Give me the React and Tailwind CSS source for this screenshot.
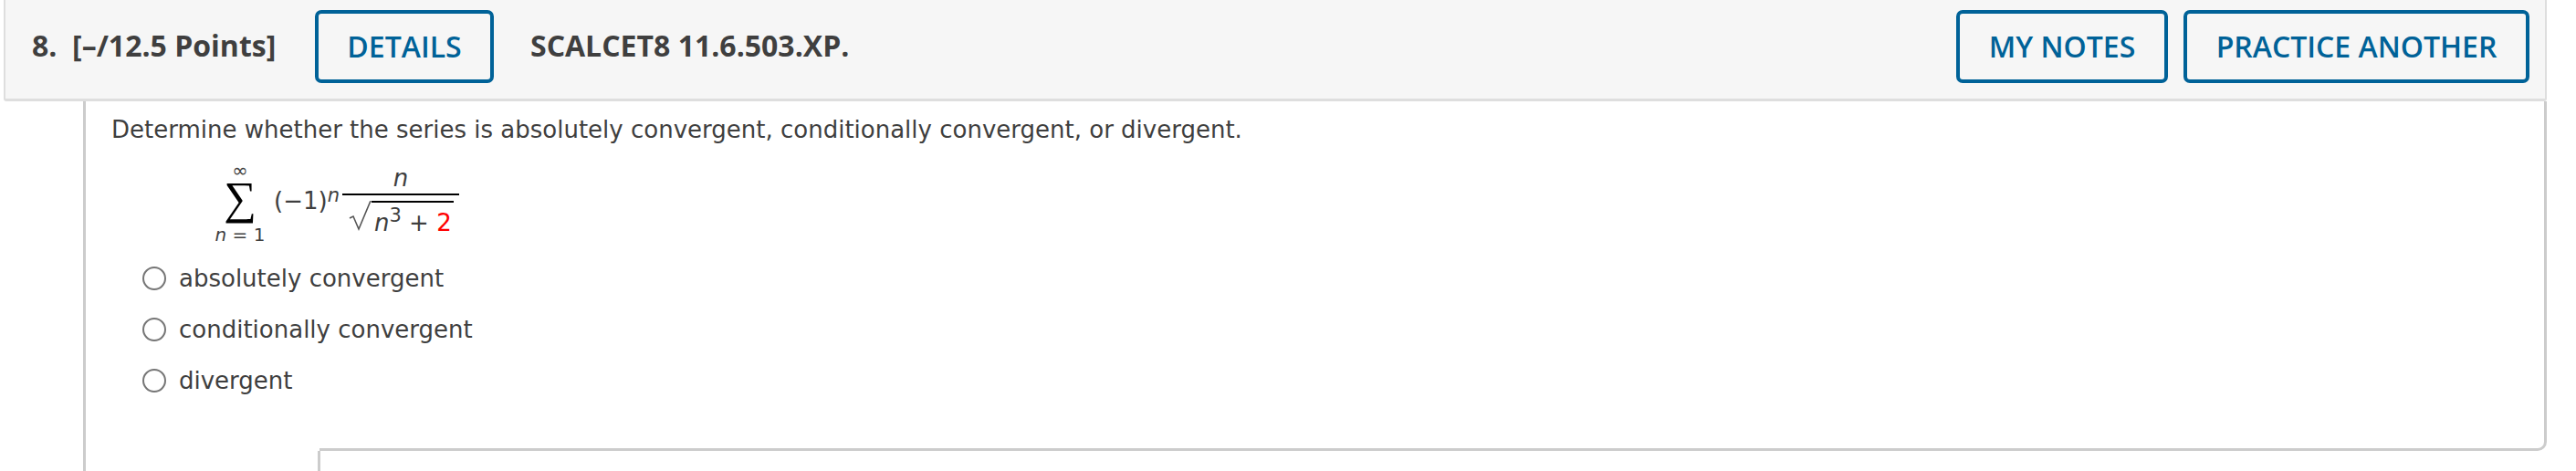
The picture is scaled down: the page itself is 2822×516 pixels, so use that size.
const answers = ["absolutely convergent", "conditionally convergent", "divergent"];

function HeaderButton({ label, className = "" }) {
  return (
    <button
      type="button"
      className={`flex h-[80px] items-center justify-center rounded-[7px] border-[4px] border-[#006298] pb-[1px] text-[32px] font-semibold text-[#006298] ${className}`}
    >
      {label}
    </button>
  );
}

function Formula() {
  const math = "font-['DejaVu_Sans',sans-serif] text-[#3f3f3f]";
  return (
    <div className={`ml-[113px] mt-[17px] flex h-[92px] items-start ${math}`}>
      <div className="flex h-[92px] w-[56px] flex-col items-center">
        <span className="h-[20px] text-[21px] leading-[20px]">∞</span>
        <span className="h-[50px] font-['Liberation_Serif',serif] text-[50px] leading-[40px] text-black">∑</span>
        <span className="whitespace-nowrap text-[20px] leading-[24px]">
          <i>n</i> = 1
        </span>
      </div>
      <div className="ml-[9px] mt-[27px] flex w-[75px] items-start whitespace-nowrap text-[26px] leading-[32px]">
        <span>(−1)</span>
        <i className="-mt-[6px] text-[21px]">n</i>
      </div>
      <div className="flex w-[128px] flex-col items-center">
        <i className="h-[35px] text-[26px] leading-[36px]">n</i>
        <div className="h-[2px] w-full bg-black" />
        <div className="mt-[6px] flex h-[46px] w-full items-start pl-[7px]">
          <svg width="25" height="34" viewBox="0 0 25 34" className="shrink-0 text-[#555]">
            <path d="M1 19l4-2 6 14 13-31" fill="none" stroke="currentColor" strokeWidth="1.6" />
          </svg>
          <div className="h-[44px] w-[90px] whitespace-nowrap border-t-2 border-black pl-[3px] text-[26px] leading-[44px]">
            <i>n</i>
            <sup className="text-[21px] leading-none">3</sup> + <span className="text-[#ff0000]">2</span>
          </div>
        </div>
      </div>
    </div>
  );
}

export default function App() {
  return (
    <div className="h-[516px] w-[2822px] overflow-hidden bg-white font-['Open_Sans',sans-serif] text-[#3f3f3f]">
      <header className="ml-[4px] flex h-[111px] w-[2786px] items-start rounded-b-[3px] border-b-[3px] border-l-2 border-r-2 border-[#dedede] bg-[#f6f6f6] pt-[11px]">
        <span className="ml-[29px] w-[310px] whitespace-pre text-[32px] font-bold leading-[78px]">8.  [–/12.5 Points]</span>
        <HeaderButton label="DETAILS" className="w-[196px]" />
        <span className="ml-[40px] text-[32px] font-bold leading-[78px]">SCALCET8 11.6.503.XP.</span>
        <div className="ml-auto mr-[17px] flex gap-[17px]">
          <HeaderButton label="MY NOTES" className="w-[232px]" />
          <HeaderButton label="PRACTICE ANOTHER" className="w-[379px]" />
        </div>
      </header>

      <div className="ml-[91px] h-[405px] w-[2699px] border-l-[3px] border-[#cccccc]">
        <div className="grid h-[405px]">
          <div className="[grid-area:1/1] ml-[256px] h-[383px] rounded-br-[10px] border-b-[3px] border-r-[3px] border-[#cccccc]" />
          <div className="[grid-area:1/1] pl-[28px] pt-[13px] font-['DejaVu_Sans',sans-serif] text-[26px]">
            <p className="h-[36px] whitespace-nowrap leading-[36px]">
              Determine whether the series is absolutely convergent, conditionally convergent, or divergent.
            </p>
            <Formula />
            <div className="ml-[34px] mt-[8px] flex flex-col">
              {answers.map((answer) => (
                <label key={answer} className="flex h-[56px] items-center gap-[14px]">
                  <input
                    type="radio"
                    name="answer"
                    className="h-[26px] w-[26px] appearance-none rounded-full border-2 border-[#767676] bg-white"
                  />
                  <span>{answer}</span>
                </label>
              ))}
            </div>
          </div>
          <div className="[grid-area:1/1] ml-[254px] mt-[383px] h-[22px] border-l-[3px] border-[#cccccc]" />
        </div>
      </div>
    </div>
  );
}
